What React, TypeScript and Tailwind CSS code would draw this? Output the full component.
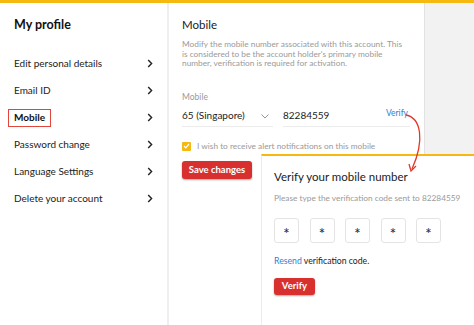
import React from "react";

const Chevron = () => (
  <svg width="6" height="9" viewBox="0 0 6 9" className="shrink-0">
    <path d="M1.2 1 L4.6 4.5 L1.2 8" fill="none" stroke="#222" strokeWidth="1.4" />
  </svg>
);

const items = [
  "Edit personal details",
  "Email ID",
  "Mobile",
  "Password change",
  "Language Settings",
  "Delete your account",
];

export default function App() {
  return (
    <div
      className="relative w-[474px] h-[325px] overflow-hidden bg-[#efefef]"
      style={{ fontFamily: "Lato, 'Open Sans', sans-serif" }}
    >
      <div className="h-[3px] bg-[#f5b912]" />
      <div className="flex h-[322px]">
        {/* Sidebar */}
        <div className="w-[167px] bg-white flex flex-col">
          <div className="pl-[14px] pt-[14px] text-[12.5px] font-bold text-[#111] leading-[16px]">
            My profile
          </div>
          <div className="mt-[17px] flex flex-col">
            {items.map((t) => (
              <div key={t} className="h-[27px] flex items-center justify-between pl-[14px] pr-[14px]">
                {t === "Mobile" ? (
                  <span className="-ml-[6px] px-[5px] h-[18px] flex items-center border-[1.5px] border-[#e0463a] text-[10px] font-bold text-[#111]">
                    Mobile
                  </span>
                ) : (
                  <span className="text-[10px] text-[#222]">{t}</span>
                )}
                <Chevron />
              </div>
            ))}
          </div>
        </div>

        {/* Main */}
        <div className="ml-[2px] w-[255px] bg-white pl-[13px] pr-[14px]">
          <div className="pt-[14px] text-[11.5px] text-[#222] leading-[16px]">Mobile</div>
          <div className="mt-[7px] text-[8.3px] leading-[9.6px] text-[#9a9a9a]">
            Modify the mobile number associated with this account. This
            <br />
            is considered to be the account holder's primary mobile
            <br />
            number, verification is required for activation.
          </div>
          <div className="mt-[23px] text-[8.5px] text-[#9a9a9a] leading-[10px]">Mobile</div>
          <div className="mt-[6px] flex items-end">
            <div className="w-[91px] flex items-center justify-between border-b border-[#ececec] pb-[3px]">
              <span className="text-[10px] text-[#222]">65 (Singapore)</span>
              <svg width="8" height="5" viewBox="0 0 8 5" className="mr-[4px] mt-[3px]">
                <path d="M0.5 0.5 L4 4 L7.5 0.5" fill="none" stroke="#888" strokeWidth="0.9" />
              </svg>
            </div>
            <div className="ml-[10px] flex-1 flex items-center justify-between border-b border-[#ececec] pb-[3px]">
              <span className="text-[10px] text-[#222]">82284559</span>
              <span className="text-[8.5px] text-[#2f7fd3] mr-[2px] -mt-[3px]">Verify</span>
            </div>
          </div>
          <div className="mt-[13px] flex items-center">
            <div className="w-[9px] h-[9px] bg-[#f5b912] rounded-[1px] flex items-center justify-center">
              <svg width="7" height="6" viewBox="0 0 7 6">
                <path d="M1 3 L2.8 4.8 L6 1" fill="none" stroke="white" strokeWidth="1.2" />
              </svg>
            </div>
            <span className="ml-[6px] text-[8.3px] text-[#9a9a9a]">
              I wish to receive alert notifications on this mobile
            </span>
          </div>
          <button className="mt-[9px] w-[70px] h-[18px] rounded-[3px] bg-[#d8302f] text-white text-[9.5px] font-bold shadow-[0_1px_2px_rgba(0,0,0,0.35)]">
            Save changes
          </button>
        </div>

        {/* Right gray */}
        <div className="flex-1 border-l border-[#e2e2e2] bg-[#f2f2f2]" />
      </div>

      {/* Verify popup */}
      <div className="absolute left-[261px] top-[154px] right-0 bottom-0 bg-white border-t-2 border-[#f5b912] border-l border-l-[#ececec] pl-[12px]">
        <div className="pt-[13px] text-[11.5px] text-[#222] leading-[16px]">Verify your mobile number</div>
        <div className="mt-[8px] text-[8.3px] text-[#9a9a9a] leading-[10px]">
          Please type the verification code sent to 82284559
        </div>
        <div className="mt-[15px] flex gap-[10.5px]">
          {[0, 1, 2, 3, 4].map((i) => (
            <div
              key={i}
              className="w-[25px] h-[25px] rounded-[3px] border border-[#e4e4e4] flex items-center justify-center"
            >
              <span className="text-[15px] leading-none text-[#2b3350] font-medium pt-[6px]">*</span>
            </div>
          ))}
        </div>
        <div className="mt-[13px] text-[8.7px] text-[#222] leading-[10px]">
          <span className="text-[#2f7fd3]">Resend</span> verification code.
        </div>
        <button className="mt-[12px] w-[41px] h-[17px] rounded-[3px] bg-[#d8302f] text-white text-[9.5px] font-bold shadow-[0_1px_2px_rgba(0,0,0,0.35)]">
          Verify
        </button>
      </div>

      {/* Red arrow */}
      <svg className="absolute left-0 top-0" width="474" height="325" viewBox="0 0 474 325" style={{ pointerEvents: "none" }}>
        <path d="M406 115 C421 118 425 140 412 169" fill="none" stroke="#e0392b" strokeWidth="1.3" />
        <path d="M409 164 L411 171 L416 166" fill="none" stroke="#e0392b" strokeWidth="1.3" />
      </svg>
    </div>
  );
}
